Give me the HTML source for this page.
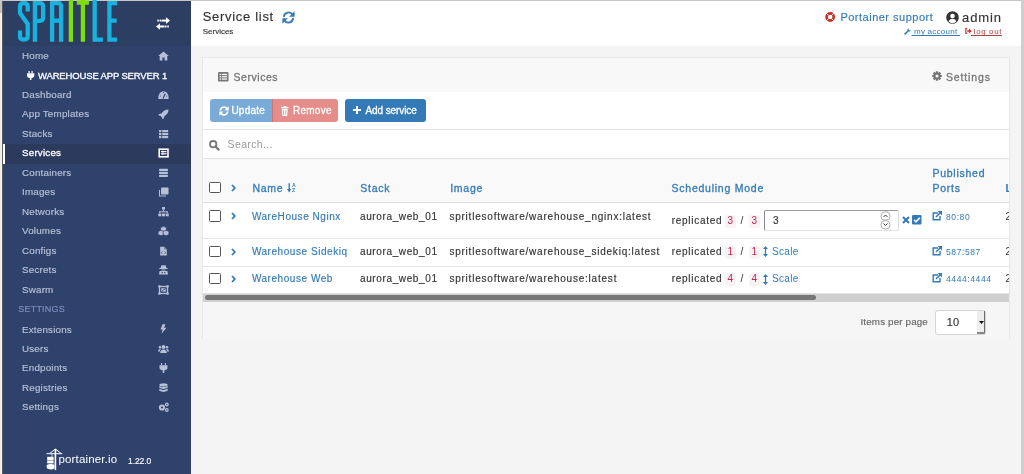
<!DOCTYPE html>
<html><head><meta charset="utf-8"><style>
*{box-sizing:border-box;margin:0;padding:0}
html,body{width:1024px;height:474px;overflow:hidden;background:#f4f4f4;font-family:"Liberation Sans",sans-serif}
.a{position:absolute;white-space:nowrap}
body{will-change:transform}
svg{position:absolute;overflow:visible}
</style></head><body>
<div class="a" style="left:3px;top:1px;width:188px;height:473px;background:#2f426c;"></div>
<div class="a" style="left:3px;top:1px;width:188px;height:44.5px;background:#2d3e63;"></div>
<div class="a" style="left:0px;top:0px;width:2px;height:474px;background:#efefef;"></div>
<div class="a" style="left:0px;top:0px;width:2px;height:13px;background:#c4c4c4;"></div>
<div class="a" style="left:2px;top:0px;width:1px;height:474px;background:#5d5d5d;"></div>
<div class="a" style="left:0px;top:0px;width:1024px;height:1px;background:#c6c6c6;"></div>
<div class="a" style="left:1021px;top:0px;width:3px;height:474px;background:#cfcfcf;"></div>
<div class="a" style="left:191px;top:1px;width:830px;height:45px;background:#ffffff;"></div>
<svg style="left:0;top:0" width="191" height="46" viewBox="0 0 191 46">
<g fill="none" stroke="#17b3e0" stroke-width="4.25" stroke-linecap="butt">
<path d="M27.7,11.4 V6.6 Q27.7,3.2 23.9,3.2 Q20,3.2 20,6.6 V13 L27.7,24 V36.3 Q27.7,39.6 23.9,39.6 Q20,39.6 20,36.3 V30.4"/>
<path d="M34.9,41.8 V3.2 H39.8 Q43.1,3.2 43.1,6.6 V17.6 Q43.1,20.9 39.8,20.9 H34.9"/>
<path d="M52.1,41.8 V3.2 H57.8 Q61.1,3.2 61.1,6.6 V41.8 M52.1,20.7 H61.1"/>
<path d="M94.7,0 V39.6 H102.9"/>
<path d="M117.2,3.2 H109.4 V39.6 H117.2 M109.4,20.7 H116.7"/>
</g>
<g fill="none" stroke="#7ddf07" stroke-width="4.25">
<path d="M70.9,0 V41.8"/>
<path d="M76.8,2.6 H88.9 M82.9,0 V41.8"/>
</g>
</svg>
<svg style="left:156px;top:17px" width="15" height="14" viewBox="0 0 15 14">
<g fill="#fff">
<rect x="1.3" y="2.6" width="1.5" height="2"/><rect x="3.6" y="2.6" width="1.5" height="2"/>
<rect x="5.5" y="2.6" width="5" height="2"/><path d="M10,0.3 L14,3.6 L10,6.9 Z"/>
<path d="M0,9.5 L4,6.2 L4,12.8 Z"/><rect x="3.5" y="8.5" width="5" height="2"/>
<rect x="9" y="8.5" width="1.5" height="2"/><rect x="11.3" y="8.5" width="1.5" height="2"/>
</g></svg>
<div class="a" style="left:3px;top:144px;width:188px;height:19.5px;background:#2c3a5e;"></div>
<div class="a" style="left:3px;top:144px;width:2px;height:19.5px;background:#ffffff;"></div>
<div class="a" style="left:22px;top:49.90px;font-size:9.8px;line-height:12px;color:#b8c0d7;-webkit-text-stroke:0.15px #b8c0d7;letter-spacing:0.2px;">Home</div>
<div class="a" style="left:22px;top:88.90px;font-size:9.8px;line-height:12px;color:#b8c0d7;-webkit-text-stroke:0.15px #b8c0d7;letter-spacing:0.2px;">Dashboard</div>
<div class="a" style="left:22px;top:108.40px;font-size:9.8px;line-height:12px;color:#b8c0d7;-webkit-text-stroke:0.15px #b8c0d7;letter-spacing:0.2px;">App Templates</div>
<div class="a" style="left:22px;top:127.90px;font-size:9.8px;line-height:12px;color:#b8c0d7;-webkit-text-stroke:0.15px #b8c0d7;letter-spacing:0.2px;">Stacks</div>
<div class="a" style="left:22px;top:147.40px;font-size:9.8px;line-height:12px;color:#ffffff;-webkit-text-stroke:0.3px #ffffff;letter-spacing:0.2px;">Services</div>
<div class="a" style="left:22px;top:166.90px;font-size:9.8px;line-height:12px;color:#b8c0d7;-webkit-text-stroke:0.15px #b8c0d7;letter-spacing:0.2px;">Containers</div>
<div class="a" style="left:22px;top:186.40px;font-size:9.8px;line-height:12px;color:#b8c0d7;-webkit-text-stroke:0.15px #b8c0d7;letter-spacing:0.2px;">Images</div>
<div class="a" style="left:22px;top:205.90px;font-size:9.8px;line-height:12px;color:#b8c0d7;-webkit-text-stroke:0.15px #b8c0d7;letter-spacing:0.2px;">Networks</div>
<div class="a" style="left:22px;top:225.40px;font-size:9.8px;line-height:12px;color:#b8c0d7;-webkit-text-stroke:0.15px #b8c0d7;letter-spacing:0.2px;">Volumes</div>
<div class="a" style="left:22px;top:244.90px;font-size:9.8px;line-height:12px;color:#b8c0d7;-webkit-text-stroke:0.15px #b8c0d7;letter-spacing:0.2px;">Configs</div>
<div class="a" style="left:22px;top:264.40px;font-size:9.8px;line-height:12px;color:#b8c0d7;-webkit-text-stroke:0.15px #b8c0d7;letter-spacing:0.2px;">Secrets</div>
<div class="a" style="left:22px;top:283.90px;font-size:9.8px;line-height:12px;color:#b8c0d7;-webkit-text-stroke:0.15px #b8c0d7;letter-spacing:0.2px;">Swarm</div>
<div class="a" style="left:22px;top:323.50px;font-size:9.8px;line-height:12px;color:#b8c0d7;-webkit-text-stroke:0.15px #b8c0d7;letter-spacing:0.2px;">Extensions</div>
<div class="a" style="left:22px;top:342.90px;font-size:9.8px;line-height:12px;color:#b8c0d7;-webkit-text-stroke:0.15px #b8c0d7;letter-spacing:0.2px;">Users</div>
<div class="a" style="left:22px;top:362.40px;font-size:9.8px;line-height:12px;color:#b8c0d7;-webkit-text-stroke:0.15px #b8c0d7;letter-spacing:0.2px;">Endpoints</div>
<div class="a" style="left:22px;top:381.90px;font-size:9.8px;line-height:12px;color:#b8c0d7;-webkit-text-stroke:0.15px #b8c0d7;letter-spacing:0.2px;">Registries</div>
<div class="a" style="left:22px;top:401.40px;font-size:9.8px;line-height:12px;color:#b8c0d7;-webkit-text-stroke:0.15px #b8c0d7;letter-spacing:0.2px;">Settings</div>
<div class="a" style="left:38px;top:69.61px;font-size:9.5px;line-height:11px;color:#ffffff;-webkit-text-stroke:0.3px #ffffff;letter-spacing:-0.15px;">WAREHOUSE APP SERVER 1</div>
<div class="a" style="left:18.3px;top:304.38px;font-size:9px;line-height:11px;color:#7b8fc2;-webkit-text-stroke:0.15px #7b8fc2;letter-spacing:0.2px;">SETTINGS</div>
<svg style="left:27px;top:71px" width="8" height="9" viewBox="0 0 8 9"><g fill="#fff">
<rect x="1.5" y="0" width="1.2" height="2.5"/><rect x="4.5" y="0" width="1.2" height="2.5"/>
<path d="M0,2.3 H7.3 V4.5 Q7.3,6.8 4.4,7 V9 H2.9 V7 Q0,6.8 0,4.5 Z"/></g></svg>
<svg style="left:158px;top:50.5px" width="11" height="10" viewBox="0 0 11 10"><path fill="#b8c0d7" d="M5.5,0.5 L10.8,5 H9.3 V9.5 H6.6 V6.5 H4.4 V9.5 H1.7 V5 H0.2 Z"/></svg>
<svg style="left:158px;top:89.5px" width="11" height="10" viewBox="0 0 11 10"><path fill="#b8c0d7" d="M0.4,9 Q0,4.2 2.8,2.2 Q5.5,0.4 8.2,2.2 Q11,4.2 10.6,9 Z"/><path stroke="#2f426c" stroke-width="1.1" d="M5,8.5 L7.2,3.8"/><g fill="#2f426c"><circle cx="2.3" cy="6" r="0.5"/><circle cx="8.7" cy="6" r="0.5"/><circle cx="5.5" cy="2.6" r="0.5"/></g></svg>
<svg style="left:158px;top:109.0px" width="11" height="10" viewBox="0 0 11 10"><path fill="#b8c0d7" d="M10.5,0.5 Q6,0.5 3.5,4.5 L1,5 L0.5,6.5 L2.5,6.8 L4,8.4 L4.4,10 L5.8,9.4 L6.5,7 Q10.5,4.5 10.5,0.5 Z"/></svg>
<svg style="left:158px;top:128.5px" width="11" height="10" viewBox="0 0 11 10"><g fill="#b8c0d7"><rect x="1" y="1" width="2.4" height="2.2"/><rect x="4.2" y="1" width="6" height="2.2"/><rect x="1" y="4" width="2.4" height="2.2"/><rect x="4.2" y="4" width="6" height="2.2"/><rect x="1" y="7" width="2.4" height="2.2"/><rect x="4.2" y="7" width="6" height="2.2"/></g></svg>
<svg style="left:158px;top:148.0px" width="11" height="10" viewBox="0 0 11 10"><rect x="1.2" y="1.2" width="8.8" height="7.6" fill="none" stroke="#fff" stroke-width="1.6"/><rect x="3" y="3" width="5.5" height="1.2" fill="#fff"/><rect x="3" y="5.2" width="5.5" height="1.2" fill="#fff"/><rect x="4.4" y="2.5" width="0.8" height="4.5" fill="#fff"/></svg>
<svg style="left:158px;top:167.5px" width="11" height="10" viewBox="0 0 11 10"><g fill="#b8c0d7"><rect x="1" y="0.8" width="9" height="2.3" rx="0.8"/><rect x="1" y="3.8" width="9" height="2.3" rx="0.8"/><rect x="1" y="6.8" width="9" height="2.3" rx="0.8"/></g></svg>
<svg style="left:158px;top:187.0px" width="11" height="10" viewBox="0 0 11 10"><g fill="#b8c0d7"><rect x="3" y="0.5" width="7.5" height="7" rx="0.8"/><path d="M1,3 V9.5 H8 V8.5 H2 V3 Z"/></g></svg>
<svg style="left:158px;top:206.5px" width="11" height="10" viewBox="0 0 11 10"><g fill="#b8c0d7"><rect x="4" y="0" width="3" height="2.6"/><rect x="5" y="2.6" width="1" height="2"/><rect x="1.3" y="4.3" width="8.4" height="1"/><rect x="1.3" y="4.3" width="1" height="2"/><rect x="8.7" y="4.3" width="1" height="2"/><rect x="0.3" y="6.5" width="3" height="2.8"/><rect x="4" y="6.5" width="3" height="2.8"/><rect x="7.7" y="6.5" width="3" height="2.8"/></g></svg>
<svg style="left:158px;top:226.0px" width="11" height="10" viewBox="0 0 11 10"><g fill="#b8c0d7" stroke="#2f426c" stroke-width="0.7"><path d="M5.5,0.3 L8.4,1.6 V4.6 L5.5,5.9 L2.6,4.6 V1.6 Z"/><path d="M3,4.2 L5.9,5.5 V8.5 L3,9.8 L0.1,8.5 V5.5 Z"/><path d="M8,4.2 L10.9,5.5 V8.5 L8,9.8 L5.1,8.5 V5.5 Z"/></g></svg>
<svg style="left:158px;top:245.5px" width="11" height="10" viewBox="0 0 11 10"><path fill="#b8c0d7" d="M2.2,0.8 H6.4 L8.8,3.2 V9.6 H2.2 Z"/><path fill="#2f426c" d="M6.2,0.8 V3.4 H8.8 Z" opacity="0.6"/><path stroke="#2f426c" stroke-width="0.7" fill="none" d="M4.4,5.4 L3.5,6.6 L4.4,7.8 M6.6,5.4 L7.5,6.6 L6.6,7.8"/></svg>
<svg style="left:158px;top:265.0px" width="11" height="10" viewBox="0 0 11 10"><g fill="#b8c0d7"><path d="M3.2,0.6 Q5.5,-0.2 7.8,0.6 L8.4,3 H9.6 V3.9 H1.4 V3 H2.6 Z"/><path d="M3.5,4.6 H7.5 V5.5 H3.5 Z"/><path d="M1.6,6 H9.4 L10,9.6 H1 Z"/></g><g fill="#2f426c"><rect x="3.6" y="7.2" width="1.4" height="1"/><rect x="6" y="7.2" width="1.4" height="1"/></g></svg>
<svg style="left:158px;top:284.5px" width="11" height="10" viewBox="0 0 11 10"><rect x="1.5" y="1.5" width="8" height="7" fill="none" stroke="#b8c0d7" stroke-width="1.3"/><g fill="#b8c0d7"><rect x="0.3" y="0.3" width="2.2" height="2.2"/><rect x="8.5" y="0.3" width="2.2" height="2.2"/><rect x="0.3" y="7.5" width="2.2" height="2.2"/><rect x="8.5" y="7.5" width="2.2" height="2.2"/><path d="M3.2,3.3 H7.8 V6.7 H3.2 Z"/></g><path d="M3.6,6.4 L7.6,3.6" stroke="#2f426c" stroke-width="0.8"/></svg>
<svg style="left:158px;top:324.1px" width="11" height="10" viewBox="0 0 11 10"><path fill="#b8c0d7" d="M4.5,0.3 H7.5 L6,3.8 H8.5 L3.5,9.8 L4.6,5.5 H2.5 Z"/></svg>
<svg style="left:158px;top:343.5px" width="11" height="10" viewBox="0 0 11 10"><g fill="#b8c0d7"><circle cx="5.5" cy="3" r="1.9"/><path d="M2.2,9 Q2.2,5.5 5.5,5.5 Q8.8,5.5 8.8,9 Z"/><circle cx="2" cy="3.3" r="1.3"/><circle cx="9" cy="3.3" r="1.3"/><path d="M0,7.5 Q0,5 2,5 Q2.7,5 3,5.3 Q1.8,6.2 1.8,7.5 Z M11,7.5 Q11,5 9,5 Q8.3,5 8,5.3 Q9.2,6.2 9.2,7.5 Z"/></g></svg>
<svg style="left:158px;top:363.0px" width="11" height="10" viewBox="0 0 11 10"><g fill="#b8c0d7"><rect x="3" y="0" width="1.1" height="2.5"/><rect x="6.9" y="0" width="1.1" height="2.5"/><path d="M1.5,2.3 H9.5 V4.8 Q9.5,7 6.3,7.3 V10 H4.7 V7.3 Q1.5,7 1.5,4.8 Z"/></g></svg>
<svg style="left:158px;top:382.5px" width="11" height="10" viewBox="0 0 11 10"><g fill="#b8c0d7"><ellipse cx="5.5" cy="1.8" rx="4.2" ry="1.6"/><path d="M1.3,3 Q5.5,5.2 9.7,3 V4.8 Q5.5,7 1.3,4.8 Z M1.3,5.8 Q5.5,8 9.7,5.8 V7.8 Q5.5,10 1.3,7.8 Z"/></g></svg>
<svg style="left:158px;top:402.0px" width="11" height="10" viewBox="0 0 11 10"><g fill="#b8c0d7"><circle cx="4" cy="5.5" r="3.1"/><circle cx="8.8" cy="2.5" r="1.9"/><circle cx="8.8" cy="8" r="1.9"/></g><circle cx="4" cy="5.5" r="1.1" fill="#2f426c"/><circle cx="8.8" cy="2.5" r="0.7" fill="#2f426c"/><circle cx="8.8" cy="8" r="0.7" fill="#2f426c"/></svg>
<div class="a" style="left:58.5px;top:451.82px;font-size:11.5px;line-height:14px;color:#ffffff;letter-spacing:0.15px;">portainer.io</div>
<div class="a" style="left:128px;top:455.65px;font-size:8.5px;line-height:10px;color:#ffffff;-webkit-text-stroke:0.15px #ffffff;letter-spacing:-0.1px;">1.22.0</div>
<svg style="left:46px;top:448px" width="18" height="24" viewBox="0 0 18 24"><g fill="#fff">
<rect x="8.6" y="1" width="1.6" height="21"/>
<rect x="0.5" y="5.2" width="15.8" height="1"/>
<path d="M9.4,0.6 L15.5,5.2 H14.3 L9.4,1.8 L4.5,5.2 H3.3 Z"/>
<rect x="5.6" y="6" width="0.7" height="3"/>
<rect x="1.2" y="8.8" width="6.4" height="3.2"/>
<rect x="1.2" y="12.4" width="6.4" height="3"/>
<path d="M1.5,16.5 Q0.3,17 0.6,19 Q1,21.5 3.6,21.3 Q6.5,21.8 8,20.5 Q9.3,19 8.3,17 Q7.5,15.8 5,16 Q3,15.8 1.5,16.5 Z"/>
</g></svg>
<div class="a" style="left:202.7px;top:9.40px;font-size:13px;line-height:16px;color:#333333;-webkit-text-stroke:0.15px #333333;letter-spacing:0.7px;">Service list</div>
<div class="a" style="left:202.7px;top:26.73px;font-size:8px;line-height:10px;color:#333333;-webkit-text-stroke:0.15px #333333;">Services</div>
<svg style="left:282px;top:10.5px" width="13" height="13" viewBox="0 0 13 13"><g fill="none" stroke="#337ab7" stroke-width="1.9"><path d="M1.8,5.8 A4.8,4.8 0 0 1 10.6,3.6"/><path d="M11.2,7.2 A4.8,4.8 0 0 1 2.4,9.4"/></g><g fill="#337ab7"><path d="M12.6,0.3 V5.8 H7.1 Z"/><path d="M0.4,12.7 V7.2 H5.9 Z"/></g></svg>
<svg style="left:824.8px;top:12.2px" width="10.3" height="10" viewBox="0 0 10 10"><circle cx="5" cy="5" r="3.6" fill="none" stroke="#c9302c" stroke-width="2.6"/><g stroke="#fff" stroke-width="0.9"><path d="M1.2,1.2 L3.2,3.2 M8.8,1.2 L6.8,3.2 M1.2,8.8 L3.2,6.8 M8.8,8.8 L6.8,6.8"/></g></svg>
<div class="a" style="left:840.4px;top:10.69px;font-size:11px;line-height:13px;color:#337ab7;-webkit-text-stroke:0.15px #337ab7;letter-spacing:0.5px;">Portainer support</div>
<svg style="left:946px;top:10.5px" width="13" height="13" viewBox="0 0 13 13"><circle cx="6.5" cy="6.5" r="6.3" fill="#333"/><circle cx="6.5" cy="5" r="2.3" fill="#fff"/><path d="M2.6,10.6 Q3.6,7.8 6.5,7.8 Q9.4,7.8 10.4,10.6 Q8.8,12.2 6.5,12.2 Q4.2,12.2 2.6,10.6 Z" fill="#fff"/></svg>
<div class="a" style="left:962px;top:9.90px;font-size:13px;line-height:16px;color:#333333;-webkit-text-stroke:0.15px #333333;letter-spacing:0.9px;">admin</div>
<svg style="left:904px;top:28px" width="7" height="7" viewBox="0 0 7 7"><path d="M0.6,6.4 L3.8,3.2" stroke="#337ab7" stroke-width="1.6"/><path d="M3.2,2.6 Q3,0.6 5.4,0.3 L4.4,1.6 L5.3,2.6 L6.6,1.5 Q6.5,4 4.3,3.7 Z" fill="#337ab7"/></svg>
<div class="a" style="left:911.5px;top:26.53px;font-size:8px;line-height:10px;color:#337ab7;letter-spacing:0.25px;text-decoration:underline;text-decoration-skip-ink:none;">&nbsp;my account&nbsp;</div>
<svg style="left:964.5px;top:28.3px" width="7" height="6" viewBox="0 0 7 6"><path d="M2.2,0.6 H0.8 V5.4 H2.2" fill="none" stroke="#c9302c" stroke-width="1.1"/><path d="M2.2,2.2 H4 V0.4 L6.8,3 L4,5.6 V3.8 H2.2 Z" fill="#c9302c"/></svg>
<div class="a" style="left:971px;top:26.53px;font-size:8px;line-height:10px;color:#a94442;letter-spacing:0.6px;text-decoration:underline;text-decoration-skip-ink:none;">&nbsp;log out</div>
<div class="a" style="left:202px;top:57px;width:808px;height:282px;background:#e8e8e8;"></div>
<div class="a" style="left:203px;top:58px;width:806px;height:34px;background:#f8f8f8;"></div>
<svg style="left:218px;top:71.5px" width="11" height="10" viewBox="0 0 11 10"><rect x="0" y="0" width="10.5" height="9.5" rx="1" fill="#767676"/><g fill="#f8f8f8"><rect x="1.6" y="1.8" width="1.6" height="1.3"/><rect x="1.6" y="4.1" width="1.6" height="1.3"/><rect x="1.6" y="6.4" width="1.6" height="1.3"/><rect x="4" y="1.8" width="5" height="1.3"/><rect x="4" y="4.1" width="5" height="1.3"/><rect x="4" y="6.4" width="5" height="1.3"/></g></svg>
<div class="a" style="left:233.5px;top:70.56px;font-size:10.5px;line-height:13px;color:#767676;-webkit-text-stroke:0.3px #767676;letter-spacing:0.55px;">Services</div>
<svg style="left:932px;top:71px" width="10" height="10" viewBox="0 0 10 10"><g fill="#767676"><circle cx="5" cy="5" r="3.6"/><g stroke="#767676" stroke-width="2.2"><path d="M5,0.2 V9.8 M0.2,5 H9.8 M1.6,1.6 L8.4,8.4 M8.4,1.6 L1.6,8.4"/></g></g><circle cx="5" cy="5" r="1.5" fill="#f6f6f6"/></svg>
<div class="a" style="left:946px;top:70.56px;font-size:10.5px;line-height:13px;color:#767676;-webkit-text-stroke:0.3px #767676;letter-spacing:0.85px;">Settings</div>
<div class="a" style="left:203px;top:92px;width:806px;height:37px;background:#ffffff;"></div>
<div class="a" style="left:203px;top:129px;width:806px;height:1px;background:#e3e3e3;"></div>
<div class="a" style="left:210px;top:99px;width:62px;height:23px;background:#7aaad6;border-radius:3px 0 0 3px"></div>
<div class="a" style="left:272px;top:99px;width:66px;height:23px;background:#e58d8b;border-radius:0 3px 3px 0;border-left:1px solid #d07470"></div>
<div class="a" style="left:345px;top:99px;width:81px;height:23px;background:#337ab7;border-radius:3px"></div>
<svg style="left:218.5px;top:105.5px" width="10" height="10" viewBox="0 0 13 13"><g fill="none" stroke="#fff" stroke-width="2.2"><path d="M1.8,5.8 A4.8,4.8 0 0 1 10.6,3.6"/><path d="M11.2,7.2 A4.8,4.8 0 0 1 2.4,9.4"/></g><g fill="#fff"><path d="M12.6,0.3 V5.8 H7.1 Z"/><path d="M0.4,12.7 V7.2 H5.9 Z"/></g></svg>
<div class="a" style="left:231.4px;top:104.73px;font-size:10px;line-height:12px;color:#ffffff;-webkit-text-stroke:0.3px #ffffff;letter-spacing:0.25px;">Update</div>
<svg style="left:281px;top:105.5px" width="8" height="10" viewBox="0 0 8 10"><rect x="0" y="0.8" width="7.5" height="1.4" fill="#fff"/><rect x="2.5" y="0" width="2.5" height="1" fill="#fff"/><path d="M0.8,2.8 H6.7 L6.2,10 H1.3 Z" fill="#fff"/><g fill="#e58d8b"><rect x="2.2" y="4" width="0.8" height="4.8"/><rect x="4.4" y="4" width="0.8" height="4.8"/></g></svg>
<div class="a" style="left:293px;top:104.73px;font-size:10px;line-height:12px;color:#ffffff;-webkit-text-stroke:0.3px #ffffff;letter-spacing:0.25px;">Remove</div>
<svg style="left:353px;top:106px" width="8" height="8" viewBox="0 0 8 8"><path d="M4,0 V8 M0,4 H8" stroke="#fff" stroke-width="2"/></svg>
<div class="a" style="left:365.5px;top:104.73px;font-size:10px;line-height:12px;color:#ffffff;-webkit-text-stroke:0.3px #ffffff;letter-spacing:-0.1px;">Add service</div>
<div class="a" style="left:203px;top:130px;width:806px;height:28px;background:#ffffff;"></div>
<div class="a" style="left:203px;top:158px;width:806px;height:1px;background:#e3e3e3;"></div>
<svg style="left:209px;top:139.5px" width="11" height="10" viewBox="0 0 11 10"><circle cx="4.2" cy="4.2" r="3.2" fill="none" stroke="#767676" stroke-width="1.8"/><path d="M6.5,6.5 L9.6,9.6" stroke="#767676" stroke-width="2.2" stroke-linecap="round"/></svg>
<div class="a" style="left:227.6px;top:138.36px;font-size:10.5px;line-height:13px;color:#999999;letter-spacing:0.35px;">Search...</div>
<div class="a" style="left:203px;top:159px;width:806px;height:43px;background:#f9f9f9;"></div>
<div class="a" style="left:203px;top:202px;width:806px;height:1px;background:#dddddd;"></div>
<div class="a" style="left:203px;top:203px;width:806px;height:35px;background:#ffffff;"></div>
<div class="a" style="left:203px;top:238px;width:806px;height:1px;background:#e6e6e6;"></div>
<div class="a" style="left:203px;top:239px;width:806px;height:27px;background:#ffffff;"></div>
<div class="a" style="left:203px;top:266px;width:806px;height:1px;background:#e6e6e6;"></div>
<div class="a" style="left:203px;top:267px;width:806px;height:26px;background:#ffffff;"></div>
<div class="a" style="left:203px;top:293px;width:806px;height:9px;background:#d0d0d0;"></div>
<div class="a" style="left:203px;top:293px;width:806px;height:1px;background:#e3e3e3;"></div>
<div class="a" style="left:205px;top:295px;width:611px;height:4.5px;background:#777;border-radius:3px"></div>
<div class="a" style="left:203px;top:302px;width:806px;height:37px;background:#f6f6f6;"></div>
<div class="a" style="left:860.5px;top:316.20px;font-size:9.8px;line-height:12px;color:#666666;-webkit-text-stroke:0.15px #666666;letter-spacing:0.15px;">Items per page</div>
<div class="a" style="left:934.5px;top:309.5px;width:51px;height:25px;background:#fff;border:1px solid #d5d5d5;border-radius:3px"></div>
<div class="a" style="left:977px;top:311px;width:7px;height:22px;background:#efeeec;"></div>
<div class="a" style="left:984px;top:311px;width:1.2px;height:22px;background:#6a6a6a;"></div>
<div class="a" style="left:977px;top:332px;width:8px;height:1.5px;background:#888;"></div>
<svg style="left:979px;top:320.5px" width="5" height="3" viewBox="0 0 5 3"><path d="M0,0 H5 L2.5,3 Z" fill="#111"/></svg>
<div class="a" style="left:946.7px;top:315.79px;font-size:11px;line-height:13px;color:#333333;-webkit-text-stroke:0.15px #333333;letter-spacing:0.3px;">10</div>
<div class="a" style="left:209.3px;top:181.7px;width:11.5px;height:11.5px;border:1.6px solid #555;border-radius:1.5px;background:#fff"></div>
<svg style="left:231px;top:184px" width="5" height="8" viewBox="0 0 5 8"><path d="M1,1 L3.8,4 L1,7" fill="none" stroke="#337ab7" stroke-width="1.8"/></svg>
<div class="a" style="left:252.4px;top:181.66px;font-size:10.5px;line-height:13px;color:#337ab7;-webkit-text-stroke:0.3px #337ab7;letter-spacing:0.75px;">Name</div>
<svg style="left:287px;top:182px" width="9" height="11" viewBox="0 0 9 11"><path d="M2.2,1.2 V8.5" stroke="#337ab7" stroke-width="1.4"/><path d="M0,7 L2.2,10.5 L4.4,7 Z" fill="#337ab7"/><text x="5" y="4.5" font-size="5.2" font-weight="bold" fill="#337ab7" font-family="Liberation Sans">A</text><text x="5" y="10" font-size="5.2" font-weight="bold" fill="#337ab7" font-family="Liberation Sans">Z</text></svg>
<div class="a" style="left:360.3px;top:181.76px;font-size:10.5px;line-height:13px;color:#337ab7;-webkit-text-stroke:0.3px #337ab7;letter-spacing:0.75px;">Stack</div>
<div class="a" style="left:450.2px;top:181.76px;font-size:10.5px;line-height:13px;color:#337ab7;-webkit-text-stroke:0.3px #337ab7;letter-spacing:0.75px;">Image</div>
<div class="a" style="left:671.6px;top:181.76px;font-size:10.5px;line-height:13px;color:#337ab7;-webkit-text-stroke:0.3px #337ab7;letter-spacing:0.75px;">Scheduling Mode</div>
<div class="a" style="left:932.4px;top:166.96px;font-size:10.5px;line-height:13px;color:#337ab7;-webkit-text-stroke:0.3px #337ab7;letter-spacing:0.75px;">Published</div>
<div class="a" style="left:932.4px;top:181.76px;font-size:10.5px;line-height:13px;color:#337ab7;-webkit-text-stroke:0.3px #337ab7;letter-spacing:0.75px;">Ports</div>
<div class="a" style="left:1005.5px;top:181.76px;font-size:10.5px;line-height:13px;color:#337ab7;font-weight:bold;width:3.5px;overflow:hidden;">L</div>
<div class="a" style="left:209.3px;top:210.4px;width:11.5px;height:11.5px;border:1.6px solid #555;border-radius:1.5px;background:#fff"></div>
<svg style="left:231px;top:212.4px" width="5" height="8" viewBox="0 0 5 8"><path d="M1,1 L3.8,4 L1,7" fill="none" stroke="#337ab7" stroke-width="1.8"/></svg>
<div class="a" style="left:251.9px;top:210.53px;font-size:10px;line-height:12px;color:#337ab7;-webkit-text-stroke:0.15px #337ab7;letter-spacing:0.55px;">WareHouse Nginx</div>
<div class="a" style="left:360px;top:210.53px;font-size:10px;line-height:12px;color:#333333;-webkit-text-stroke:0.15px #333333;letter-spacing:0.62px;">aurora_web_01</div>
<div class="a" style="left:449.4px;top:210.53px;font-size:10px;line-height:12px;color:#333333;-webkit-text-stroke:0.15px #333333;letter-spacing:0.78px;">spritlesoftware/warehouse_nginx:latest</div>
<div class="a" style="left:671.8px;top:214.53px;font-size:10px;line-height:12px;color:#333333;-webkit-text-stroke:0.15px #333333;letter-spacing:0.7px;">replicated</div>
<div class="a" style="left:724.8px;top:214.6px;width:11.7px;height:13.3px;background:#f9f2f4;border-radius:3px"></div>
<div class="a" style="left:727.5px;top:214.53px;font-size:10px;line-height:12px;color:#c7254e;">3</div>
<div class="a" style="left:740.5px;top:214.53px;font-size:10px;line-height:12px;color:#333333;">/</div>
<div class="a" style="left:748.8px;top:214.6px;width:11.7px;height:13.3px;background:#f9f2f4;border-radius:3px"></div>
<div class="a" style="left:751.5px;top:214.53px;font-size:10px;line-height:12px;color:#c7254e;">3</div>
<svg style="left:932px;top:210.5px" width="10" height="10" viewBox="0 0 10 10"><path d="M6,2 H1.2 V8.8 H8 V5" fill="none" stroke="#337ab7" stroke-width="1.4"/><path d="M4,6 L8.8,1.2" stroke="#337ab7" stroke-width="1.5"/><path d="M5.6,0 H10 V4.4 Z" fill="#337ab7"/></svg>
<div class="a" style="left:946px;top:211.75px;font-size:8.5px;line-height:10px;color:#337ab7;letter-spacing:0.6px;">80:80</div>
<div class="a" style="left:1005.5px;top:210.53px;font-size:10px;line-height:12px;color:#333333;width:3.5px;overflow:hidden;">2</div>
<div class="a" style="left:209.3px;top:245.6px;width:11.5px;height:11.5px;border:1.6px solid #555;border-radius:1.5px;background:#fff"></div>
<svg style="left:231px;top:247.6px" width="5" height="8" viewBox="0 0 5 8"><path d="M1,1 L3.8,4 L1,7" fill="none" stroke="#337ab7" stroke-width="1.8"/></svg>
<div class="a" style="left:251.9px;top:245.84px;font-size:10px;line-height:12px;color:#337ab7;-webkit-text-stroke:0.15px #337ab7;letter-spacing:0.55px;">Warehouse Sidekiq</div>
<div class="a" style="left:360px;top:245.84px;font-size:10px;line-height:12px;color:#333333;-webkit-text-stroke:0.15px #333333;letter-spacing:0.62px;">aurora_web_01</div>
<div class="a" style="left:449.4px;top:245.84px;font-size:10px;line-height:12px;color:#333333;-webkit-text-stroke:0.15px #333333;letter-spacing:0.78px;">spritlesoftware/warehouse_sidekiq:latest</div>
<div class="a" style="left:671.8px;top:245.84px;font-size:10px;line-height:12px;color:#333333;-webkit-text-stroke:0.15px #333333;letter-spacing:0.7px;">replicated</div>
<div class="a" style="left:724.8px;top:245.9px;width:11.7px;height:13.3px;background:#f9f2f4;border-radius:3px"></div>
<div class="a" style="left:727.5px;top:245.84px;font-size:10px;line-height:12px;color:#c7254e;">1</div>
<div class="a" style="left:740.5px;top:245.84px;font-size:10px;line-height:12px;color:#333333;">/</div>
<div class="a" style="left:748.8px;top:245.9px;width:11.7px;height:13.3px;background:#f9f2f4;border-radius:3px"></div>
<div class="a" style="left:751.5px;top:245.84px;font-size:10px;line-height:12px;color:#c7254e;">1</div>
<svg style="left:763px;top:246.3px" width="5" height="11" viewBox="0 0 5 11"><path d="M2.5,2 V9" stroke="#337ab7" stroke-width="1.3"/><path d="M0,3 L2.5,0 L5,3 Z M0,8 L2.5,11 L5,8 Z" fill="#337ab7"/></svg>
<div class="a" style="left:772px;top:245.84px;font-size:10px;line-height:12px;color:#337ab7;letter-spacing:0.35px;">Scale</div>
<svg style="left:932px;top:245.8px" width="10" height="10" viewBox="0 0 10 10"><path d="M6,2 H1.2 V8.8 H8 V5" fill="none" stroke="#337ab7" stroke-width="1.4"/><path d="M4,6 L8.8,1.2" stroke="#337ab7" stroke-width="1.5"/><path d="M5.6,0 H10 V4.4 Z" fill="#337ab7"/></svg>
<div class="a" style="left:946px;top:247.05px;font-size:8.5px;line-height:10px;color:#337ab7;letter-spacing:0.6px;">587:587</div>
<div class="a" style="left:1005.5px;top:245.84px;font-size:10px;line-height:12px;color:#333333;width:3.5px;overflow:hidden;">2</div>
<div class="a" style="left:209.3px;top:272.6px;width:11.5px;height:11.5px;border:1.6px solid #555;border-radius:1.5px;background:#fff"></div>
<svg style="left:231px;top:274.6px" width="5" height="8" viewBox="0 0 5 8"><path d="M1,1 L3.8,4 L1,7" fill="none" stroke="#337ab7" stroke-width="1.8"/></svg>
<div class="a" style="left:251.9px;top:273.04px;font-size:10px;line-height:12px;color:#337ab7;-webkit-text-stroke:0.15px #337ab7;letter-spacing:0.55px;">Warehouse Web</div>
<div class="a" style="left:360px;top:273.04px;font-size:10px;line-height:12px;color:#333333;-webkit-text-stroke:0.15px #333333;letter-spacing:0.62px;">aurora_web_01</div>
<div class="a" style="left:449.4px;top:273.04px;font-size:10px;line-height:12px;color:#333333;-webkit-text-stroke:0.15px #333333;letter-spacing:0.78px;">spritlesoftware/warehouse:latest</div>
<div class="a" style="left:671.8px;top:273.04px;font-size:10px;line-height:12px;color:#333333;-webkit-text-stroke:0.15px #333333;letter-spacing:0.7px;">replicated</div>
<div class="a" style="left:724.8px;top:273.1px;width:11.7px;height:13.3px;background:#f9f2f4;border-radius:3px"></div>
<div class="a" style="left:727.5px;top:273.04px;font-size:10px;line-height:12px;color:#c7254e;">4</div>
<div class="a" style="left:740.5px;top:273.04px;font-size:10px;line-height:12px;color:#333333;">/</div>
<div class="a" style="left:748.8px;top:273.1px;width:11.7px;height:13.3px;background:#f9f2f4;border-radius:3px"></div>
<div class="a" style="left:751.5px;top:273.04px;font-size:10px;line-height:12px;color:#c7254e;">4</div>
<svg style="left:763px;top:273.5px" width="5" height="11" viewBox="0 0 5 11"><path d="M2.5,2 V9" stroke="#337ab7" stroke-width="1.3"/><path d="M0,3 L2.5,0 L5,3 Z M0,8 L2.5,11 L5,8 Z" fill="#337ab7"/></svg>
<div class="a" style="left:772px;top:273.04px;font-size:10px;line-height:12px;color:#337ab7;letter-spacing:0.35px;">Scale</div>
<svg style="left:932px;top:273.0px" width="10" height="10" viewBox="0 0 10 10"><path d="M6,2 H1.2 V8.8 H8 V5" fill="none" stroke="#337ab7" stroke-width="1.4"/><path d="M4,6 L8.8,1.2" stroke="#337ab7" stroke-width="1.5"/><path d="M5.6,0 H10 V4.4 Z" fill="#337ab7"/></svg>
<div class="a" style="left:946px;top:274.25px;font-size:8.5px;line-height:10px;color:#337ab7;letter-spacing:0.6px;">4444:4444</div>
<div class="a" style="left:1005.5px;top:273.04px;font-size:10px;line-height:12px;color:#333333;width:3.5px;overflow:hidden;">2</div>
<div class="a" style="left:764.4px;top:209.5px;width:134.5px;height:21.5px;background:#fff;border-top:1.5px solid #9a9a9a;border-left:1.5px solid #8a8a8a;border-right:1px solid #dddddd;border-bottom:1px solid #e2e2e2;border-radius:2px"></div>
<div class="a" style="left:772.9px;top:214.53px;font-size:10px;line-height:12px;color:#333333;-webkit-text-stroke:0.15px #333333;">3</div>
<svg style="left:880px;top:210.5px" width="11" height="19" viewBox="0 0 11 19"><rect x="1" y="0.8" width="9" height="8.4" rx="4" fill="#fff" stroke="#999" stroke-width="0.8"/><rect x="1" y="9.6" width="9" height="8.4" rx="4" fill="#fff" stroke="#999" stroke-width="0.8"/><path d="M3.5,6 L5.5,4 L7.5,6" fill="none" stroke="#333" stroke-width="1"/><path d="M3.5,12.5 L5.5,14.5 L7.5,12.5" fill="none" stroke="#333" stroke-width="1"/></svg>
<svg style="left:902px;top:216px" width="8" height="8" viewBox="0 0 8 8"><path d="M1,1 L7,7 M7,1 L1,7" stroke="#337ab7" stroke-width="2"/></svg>
<svg style="left:911.5px;top:215px" width="10" height="10" viewBox="0 0 10 10"><rect x="0" y="0" width="9.5" height="9.5" rx="1.2" fill="#337ab7"/><path d="M2,4.8 L4,6.8 L7.8,2.8" fill="none" stroke="#fff" stroke-width="1.6"/></svg>
</body></html>
